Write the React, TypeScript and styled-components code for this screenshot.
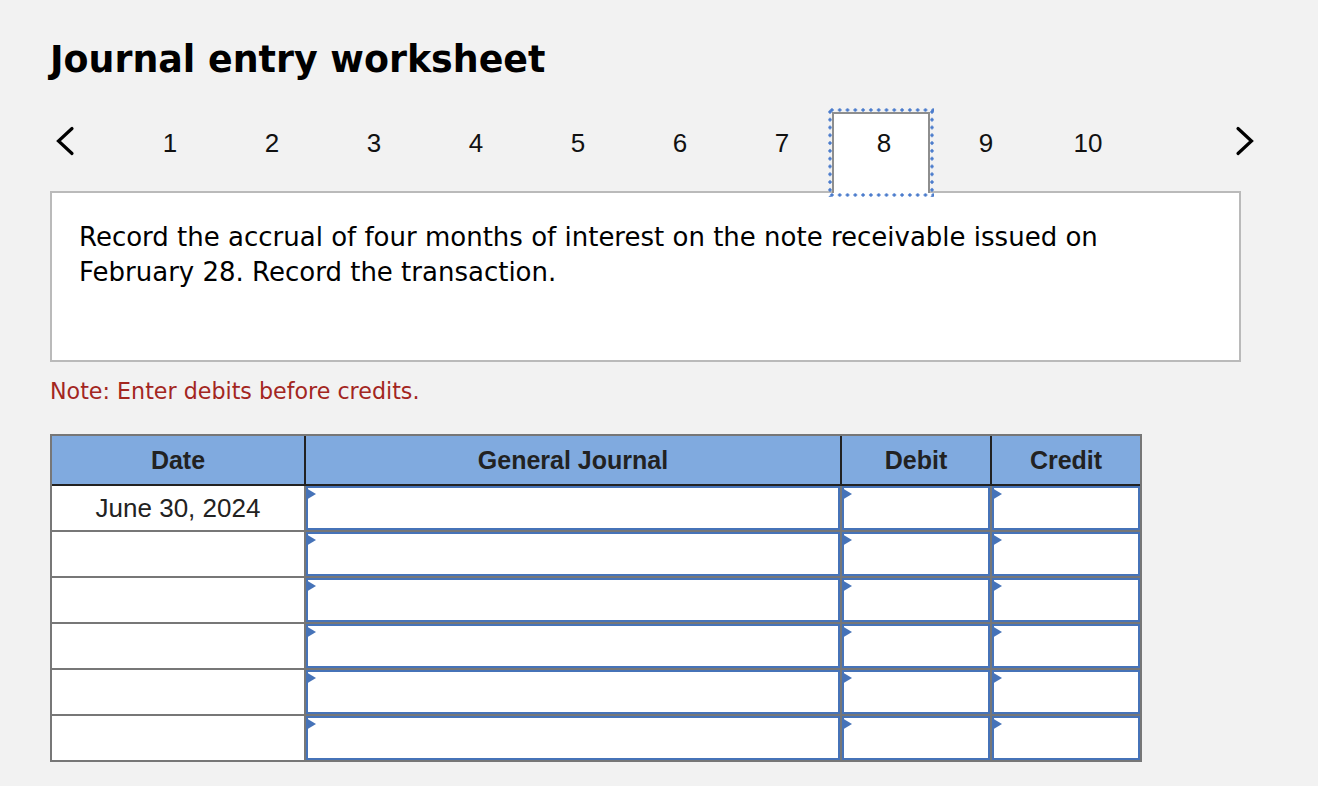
import React from "react";
import styled, { createGlobalStyle, css } from "styled-components";

const GlobalStyle = createGlobalStyle`
  html, body {
    margin: 0;
    padding: 0;
    background: #f2f2f2;
  }
  body {
    font-family: "DejaVu Sans", Verdana, sans-serif;
    color: #000;
  }
  * { box-sizing: border-box; }
`;

const Page = styled.div`
  padding: 42px 0 40px 50px;
  min-height: 786px;
  background: #f2f2f2;
`;

const Title = styled.h1`
  margin: 0;
  font-family: "DejaVu Sans", Verdana, sans-serif;
  font-weight: bold;
  font-size: 36.4px;
  line-height: 36px;
  color: #000;
`;

const Nav = styled.nav`
  display: flex;
  align-items: flex-start;
  height: 81px;
  margin-top: 34px;
  margin-bottom: -2px;
  position: relative;
  z-index: 1;
`;

const ArrowButton = styled.button<{ $side: "prev" | "next" }>`
  display: block;
  border: none;
  background: none;
  padding: 0;
  margin: 13px 0 0 ${(p) => (p.$side === "prev" ? "5px" : "101px")};
  width: ${(p) => (p.$side === "prev" ? "63px" : "20px")};
  height: 32px;
  cursor: pointer;
  svg { display: block; }
`;

const Tabs = styled.div`
  display: flex;
  gap: 4px;
`;

const dot = "radial-gradient(circle, #4a7bcc 1.4px, transparent 1.9px)";

const activeTab = css`
  background: #fff;
  border-color: #8e8e8e;
  &::after {
    content: "";
    position: absolute;
    left: -6px;
    right: -6px;
    top: -6px;
    bottom: -4px;
    pointer-events: none;
    background-image: ${dot}, ${dot}, ${dot}, ${dot};
    background-size: 7.8px 4px, 7.8px 4px, 4px 7.8px, 4px 7.8px;
    background-position: 0 0, 0 100%, 0 0, 100% 0;
    background-repeat: repeat-x, repeat-x, repeat-y, repeat-y;
  }
`;

const Tab = styled.div<{ $active?: boolean }>`
  position: relative;
  width: 98px;
  height: 81px;
  padding: 14px 0 0 6px;
  border: 2px solid transparent;
  border-bottom: none;
  background: transparent;
  text-align: center;
  font-family: "Liberation Sans", Arial, sans-serif;
  font-size: 26px;
  line-height: 30px;
  color: #111;
  ${(p) => p.$active && activeTab}
`;

const Question = styled.div`
  width: 1191px;
  height: 171px;
  background: #fff;
  border: 2px solid #bababa;
  padding: 27px 27px;
  font-family: "DejaVu Sans", Verdana, sans-serif;
  font-size: 26px;
  line-height: 35px;
  color: #000;
`;

const Note = styled.p`
  margin: 16px 0 0;
  font-family: "DejaVu Sans", Verdana, sans-serif;
  font-size: 22.2px;
  line-height: 26px;
  color: #a3261f;
`;

const Table = styled.div`
  margin-top: 30px;
  width: 1092px;
  border: 2px solid #777;
  display: flex;
  flex-direction: column;
  background: #777;
  gap: 2px;
`;

const cols = "252px 534px 148px 148px";

const HeaderRow = styled.div`
  display: grid;
  grid-template-columns: ${cols};
  gap: 2px;
  background: #222;
  border-bottom: 2px solid #222;
  margin-bottom: -2px;
`;

const HeadCell = styled.div`
  height: 48px;
  background: #80aadf;
  display: flex;
  align-items: center;
  justify-content: center;
  font-family: "Liberation Sans", Arial, sans-serif;
  font-weight: bold;
  font-size: 25px;
  color: #222;
`;

const Row = styled.div`
  display: grid;
  grid-template-columns: ${cols};
  gap: 2px;
  height: 44px;
`;

const DateCell = styled.div`
  background: #fff;
  display: flex;
  align-items: center;
  justify-content: center;
  font-family: "Liberation Sans", Arial, sans-serif;
  font-size: 26px;
  color: #222;
`;

const InputCell = styled.div`
  position: relative;
  background: #fff;
  border: 2px solid #4673b8;
  &::before {
    content: "";
    position: absolute;
    left: -2px;
    top: 0;
    width: 0;
    height: 0;
    border-left: 10px solid #4673b8;
    border-top: 6.5px solid transparent;
    border-bottom: 6.5px solid transparent;
  }
`;

const Chevron = ({ dir }: { dir: "left" | "right" }) => (
  <svg width="20" height="32" viewBox="0 0 20 32">
    <polyline
      points={dir === "left" ? "17,3.5 3.5,16 17,28.5" : "3,3.5 16.5,16 3,28.5"}
      fill="none"
      stroke="#000"
      strokeWidth="3.2"
      strokeLinecap="round"
      strokeLinejoin="miter"
    />
  </svg>
);

const rows = ["June 30, 2024", "", "", "", "", ""];

export default function App() {
  return (
    <>
      <GlobalStyle />
      <Page>
        <Title>Journal entry worksheet</Title>
        <Nav>
          <ArrowButton $side="prev" aria-label="Previous">
            <Chevron dir="left" />
          </ArrowButton>
          <Tabs>
            {Array.from({ length: 10 }, (_, i) => (
              <Tab key={i} $active={i === 7}>
                {i + 1}
              </Tab>
            ))}
          </Tabs>
          <ArrowButton $side="next" aria-label="Next">
            <Chevron dir="right" />
          </ArrowButton>
        </Nav>
        <Question>
          Record the accrual of four months of interest on the note receivable issued on
          February 28. Record the transaction.
        </Question>
        <Note>Note: Enter debits before credits.</Note>
        <Table>
          <HeaderRow>
            <HeadCell>Date</HeadCell>
            <HeadCell>General Journal</HeadCell>
            <HeadCell>Debit</HeadCell>
            <HeadCell>Credit</HeadCell>
          </HeaderRow>
          {rows.map((d, i) => (
            <Row key={i}>
              <DateCell>{d}</DateCell>
              <InputCell />
              <InputCell />
              <InputCell />
            </Row>
          ))}
        </Table>
      </Page>
    </>
  );
}
